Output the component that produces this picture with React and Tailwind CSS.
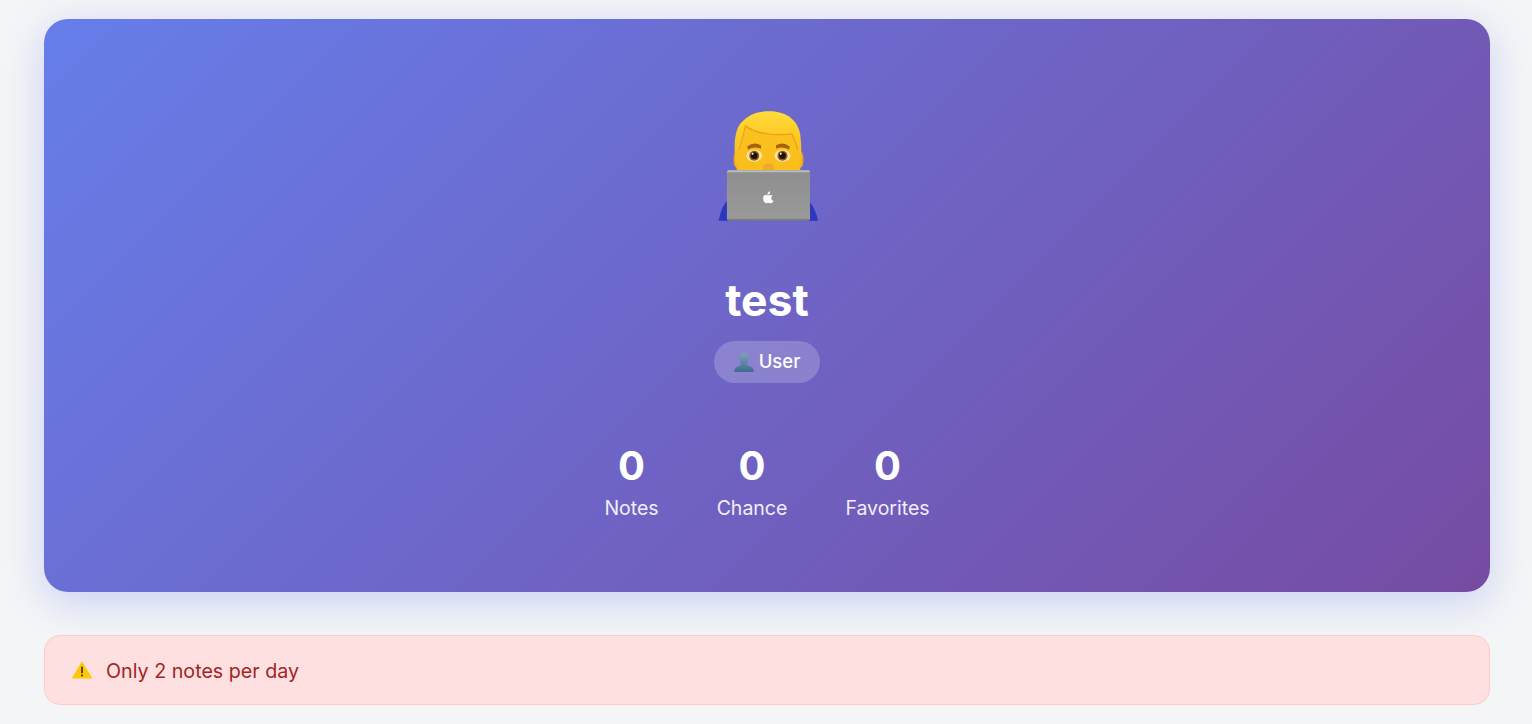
import React from 'react'

const font = "font-['Inter','Liberation_Sans',sans-serif]"

const DeveloperEmoji = () => (
  <svg viewBox="80 50 310 345" className="w-[103px] h-[115px] ml-[3px]">
    <defs>
      <linearGradient id="hair" x1="0" y1="0" x2="0" y2="1">
        <stop offset="0" stopColor="#ffdc3c" />
        <stop offset="0.4" stopColor="#fdca26" />
        <stop offset="1" stopColor="#f6b71c" />
      </linearGradient>
      <linearGradient id="skin" x1="0" y1="0" x2="0" y2="1">
        <stop offset="0" stopColor="#fbc21f" />
        <stop offset="1" stopColor="#fbbe1c" />
      </linearGradient>
      <linearGradient id="laptop" x1="0" y1="0" x2="0" y2="1">
        <stop offset="0" stopColor="#8e8e8e" />
        <stop offset="1" stopColor="#9a9a9a" />
      </linearGradient>
    </defs>
    <path d="M85 392 Q92 350 112 330 L356 332 Q376 352 384 392 Z" fill="#2b38bf" />
    <ellipse cx="138" cy="208" rx="8" ry="24" fill="#efab1c" />
    <ellipse cx="332" cy="208" rx="8" ry="24" fill="#efab1c" />
    <path d="M140 240 C130 190 128 130 150 100 C175 68 210 62 238 62 C290 62 325 90 331 135 C335 170 335 210 330 240 Z" fill="url(#hair)" />
    <path d="M165 105 C190 128 250 138 305 130 C316 150 326 180 326 240 H145 C145 190 158 150 165 105 Z" fill="url(#skin)" />
    <path d="M165 105 C190 128 250 138 305 130 C314 146 320 160 323 180" fill="none" stroke="#e99f18" strokeWidth="3.5" />
    <path d="M165 105 C160 135 152 160 146 180" fill="none" stroke="#e99f18" strokeWidth="3" />
    <path d="M171 168 Q192 152 213 165 L212 175 Q192 166 173 178 Z" fill="#a5620f" />
    <path d="M257 165 Q278 152 299 168 L297 178 Q278 166 258 175 Z" fill="#a5620f" />
    <ellipse cx="192" cy="196" rx="24" ry="18" fill="#f9e2a6" />
    <ellipse cx="277" cy="196" rx="24" ry="18" fill="#f9e2a6" />
    <circle cx="192" cy="196" r="15" fill="#8a5a1e" />
    <circle cx="277" cy="196" r="15" fill="#8a5a1e" />
    <circle cx="192" cy="196" r="10" fill="#1f1208" />
    <circle cx="277" cy="196" r="10" fill="#1f1208" />
    <circle cx="187" cy="190" r="3" fill="#fff" />
    <circle cx="272" cy="190" r="3" fill="#fff" />
    <ellipse cx="235" cy="232" rx="17" ry="13" fill="#eeaa2a" />
    <rect x="110" y="240" width="250" height="151" rx="6" fill="url(#laptop)" />
    <path d="M116 240 H354 Q360 240 360 246 H110 Q110 240 116 240 Z" fill="#bcbcbc" />
    <rect x="114" y="386" width="242" height="5" fill="#7d7d7d" />
    <path d="M240 303 Q241 311 232 314 Q231 306 240 303 Z" fill="#fff" />
    <path d="M222 315 Q229 313 234 316 Q240 313 247 316 Q243 320 243 325 Q244 331 250 332 Q246 340 241 339 Q235 336 229 339 Q222 339 219 328 Q218 318 222 315 Z" fill="#fff" />
  </svg>
)

const BustIcon = () => (
  <svg viewBox="0 0 20 20" className="w-5 h-[21px]">
    <defs>
      <linearGradient id="bust" x1="0" y1="0" x2="0" y2="1">
        <stop offset="0" stopColor="#7ea3b8" />
        <stop offset="1" stopColor="#3f6a90" />
      </linearGradient>
    </defs>
    <path
      d="M10 0.5 C14 0.5 15.2 3.5 15 6.5 C14.8 9 13.4 10.4 13 11.6 C13 13 15 13.4 17 14.3 C19 15.2 19.6 16.5 19.8 19.5 H0.2 C0.4 16.5 1 15.2 3 14.3 C5 13.4 7 13 7 11.6 C6.6 10.4 5.2 9 5 6.5 C4.8 3.5 6 0.5 10 0.5 Z"
      fill="url(#bust)"
    />
  </svg>
)

const WarningIcon = () => (
  <svg viewBox="0 0 20 18" className="w-5 h-[18px] shrink-0">
    <path d="M10 1 L19.6 17 H0.4 Z" fill="#fdc80a" stroke="#fdc80a" strokeLinejoin="round" />
    <rect x="9.2" y="5.5" width="1.6" height="7" rx="0.8" fill="#3a2c00" />
    <circle cx="10" cy="14.5" r="1" fill="#3a2c00" />
  </svg>
)

const stats = [
  { label: 'Notes', value: 0 },
  { label: 'Chance', value: 0 },
  { label: 'Favorites', value: 0 },
]

export default function App() {
  return (
    <div className={`${font} min-h-[724px] bg-[#f4f5f7] pl-[44px] pr-[42px] pt-[19px] pb-[19px]`}>
      <div className="h-[573px] rounded-3xl bg-[linear-gradient(135deg,#667eea_0%,#764ba2_100%)] shadow-[0_10px_40px_rgba(102,126,234,0.3)] flex flex-col items-center pt-[88px] text-white">
        <DeveloperEmoji />
        <h1 className="mt-[52px] text-[44.5px] leading-[53px] font-bold">test</h1>
        <div className="mt-[14px] h-[42px] px-[19.5px] rounded-full bg-white/20 flex items-center gap-[5px] text-[18.5px] font-medium">
          <BustIcon />
          <span>User</span>
        </div>
        <div className="mt-[59px] flex gap-[58px]">
          {stats.map((stat) => (
            <div key={stat.label} className="flex flex-col items-center">
              <div className="text-[40px] leading-[48px] font-bold">{stat.value}</div>
              <div className="mt-[7px] text-[19.5px] leading-[23px] text-white/90">{stat.label}</div>
            </div>
          ))}
        </div>
      </div>
      <div className="mt-[43px] h-[70px] rounded-2xl bg-[#ffe0e0] border border-[#fecaca] flex items-center gap-[14px] px-[27px] text-[#a12525] text-[19.7px]">
        <WarningIcon />
        <span className="mt-[4px]">Only 2 notes per day</span>
      </div>
    </div>
  )
}
